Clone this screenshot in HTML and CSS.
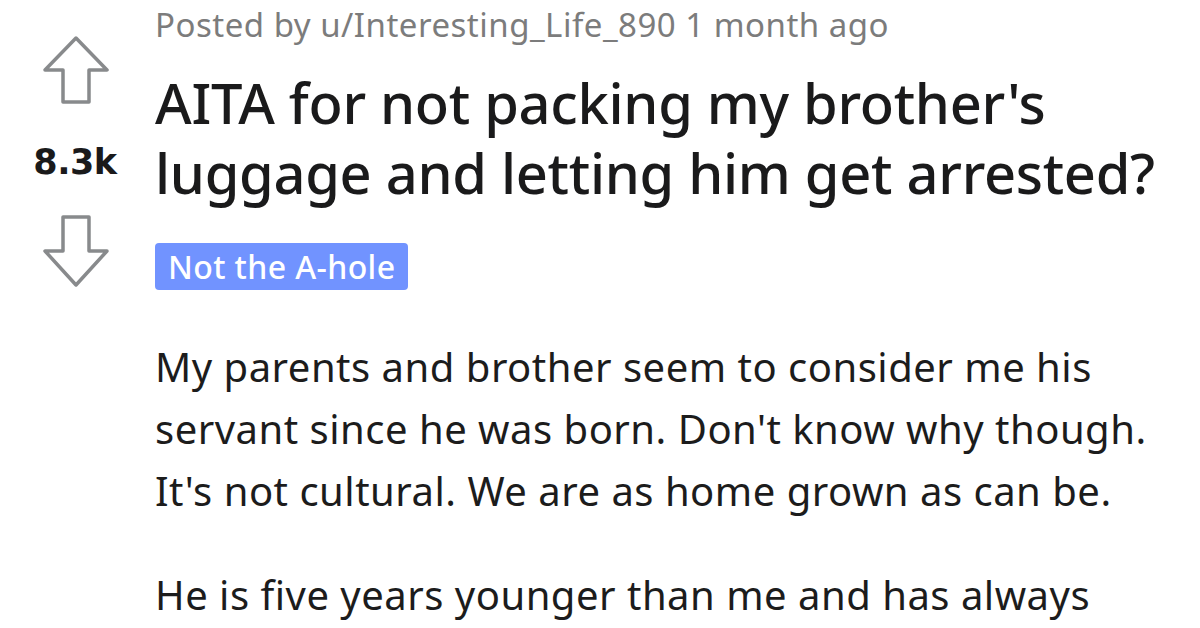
FILE: index.html
```html
<!DOCTYPE html>
<html>
<head>
<meta charset="utf-8">
<link rel="stylesheet" href="styles.css">
</head>
<body>
<div class="post">
  <div class="vote">
    <svg class="arrow" width="68" height="68" viewBox="0 0 68 68">
      <path d="M34 2 L65 34 L47 34 L47 66 L21 66 L21 34 L3 34 Z" fill="none" stroke="#888a8c" stroke-width="3.5" stroke-linejoin="round"/>
    </svg>
    <div class="count">8.3k</div>
    <svg class="arrow" width="68" height="72" viewBox="0 0 68 72">
      <path d="M21 2 L47 2 L47 36 L65 36 L34 70 L3 36 L21 36 Z" fill="none" stroke="#888a8c" stroke-width="3.5" stroke-linejoin="round"/>
    </svg>
  </div>
  <div class="content">
    <div class="meta">Posted by u/Interesting_Life_890 1 month ago</div>
    <h1 class="title">AITA for not packing my brother's<br>luggage and letting him get arrested?</h1>
    <div class="flair">Not the A-hole</div>
    <p class="para">My parents and brother seem to consider me his servant since he was born. Don't know why though. It's not cultural. We are as home grown as can be.</p>
    <p class="para para-next">He is five years younger than me and has always</p>
  </div>
</div>
</body>
</html>
```

FILE: styles.css
```css
html, body {
  margin: 0;
  padding: 0;
  background: #ffffff;
  overflow: hidden;
  height: 628px;
}
.post {
  display: flex;
  gap: 5px;
}
.vote {
  width: 150px;
  flex: none;
  display: flex;
  flex-direction: column;
  align-items: center;
  padding-top: 36px;
}
.arrow {
  display: block;
  margin-left: 1px;
}
.count {
  font-family: "DejaVu Sans", sans-serif;
  font-weight: 700;
  font-size: 35px;
  line-height: 40px;
  color: #1a1a1b;
  margin: 38px 0 33px;
  letter-spacing: -0.5px;
}
.content {
  width: 1045px;
  flex: none;
}
.meta {
  font-family: "Noto Sans", sans-serif;
  font-size: 33px;
  line-height: 40px;
  color: #7c7c7c;
  margin-top: 5px;
  letter-spacing: 0.5px;
}
.title {
  font-family: "Noto Sans", sans-serif;
  font-weight: 500;
  font-size: 56px;
  line-height: 70px;
  color: #1a1a1b;
  margin: 22px 0 0;
  white-space: nowrap;
  letter-spacing: -0.3px;
}
.flair {
  width: fit-content;
  background: #7193ff;
  color: #ffffff;
  font-family: "Noto Sans", sans-serif;
  font-weight: 500;
  font-size: 32px;
  line-height: 47px;
  padding: 0 13px;
  border-radius: 4px;
  margin-top: 36px;
  letter-spacing: 0.4px;
}
.para {
  font-family: "Noto Sans", sans-serif;
  font-size: 40px;
  line-height: 62px;
  color: #1c1c1c;
  margin: 46px 0 0;
  width: 1000px;
  letter-spacing: 0.5px;
}
.para-next {
  margin-top: 42px;
  white-space: nowrap;
}
```
